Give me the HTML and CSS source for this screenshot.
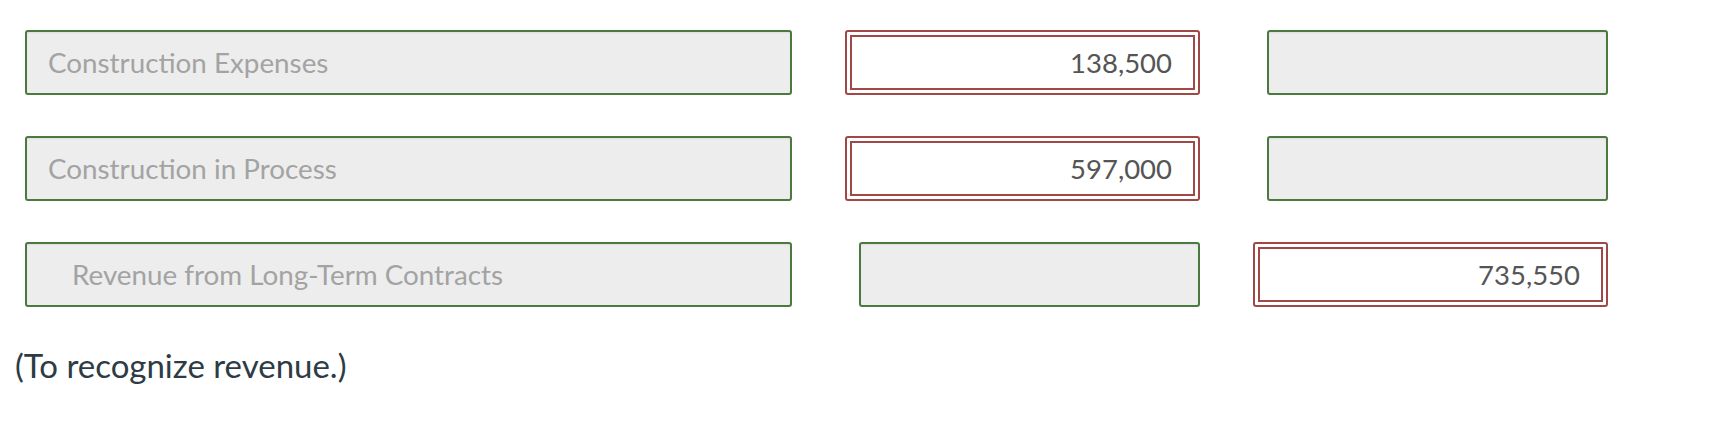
FILE: index.html
```html
<!DOCTYPE html>
<html>
<head>
<meta charset="utf-8">
<link rel="stylesheet" href="styles.css">
</head>
<body>
<div class="page">
  <div class="row">
    <div class="field label"><span>Construction Expenses</span></div>
    <div class="slot"><div class="answer"><div class="inner">138,500</div></div></div>
    <div class="slot"><div class="field amount"></div></div>
  </div>
  <div class="row">
    <div class="field label"><span>Construction in Process</span></div>
    <div class="slot"><div class="answer"><div class="inner">597,000</div></div></div>
    <div class="slot"><div class="field amount"></div></div>
  </div>
  <div class="row">
    <div class="field label indent"><span>Revenue from Long-Term Contracts</span></div>
    <div class="slot"><div class="field amount"></div></div>
    <div class="slot"><div class="answer"><div class="inner">735,550</div></div></div>
  </div>
  <p class="note">(To recognize revenue.)</p>
</div>
</body>
</html>
```

FILE: styles.css
```css
html, body {
  margin: 0;
  padding: 0;
  background: #ffffff;
}
.page {
  padding: 30px 0 0 25px;
  font-family: Lato, "Open Sans", sans-serif;
}
.row {
  display: flex;
  gap: 53px;
  height: 65px;
  margin-bottom: 41px;
}
.field {
  box-sizing: border-box;
  height: 65px;
  border: 2px solid #4b7a40;
  border-radius: 3px;
  background: #ededed;
  box-shadow: inset 0 1px 2px rgba(0, 0, 0, 0.06);
  display: flex;
  align-items: center;
}
.label {
  width: 767px;
  padding-left: 21px;
  font-size: 27.8px;
  color: #a3a3a3;
}
.label.indent {
  padding-left: 45px;
}
.slot {
  width: 355px;
  display: flex;
  justify-content: flex-end;
}
.amount {
  width: 341px;
}
.answer {
  box-sizing: border-box;
  width: 355px;
  height: 65px;
  border: 2px solid #a04845;
  border-radius: 3px;
  padding: 3px;
  background: #fff;
}
.inner {
  box-sizing: border-box;
  height: 100%;
  border: 2px solid #a04845;
  display: flex;
  align-items: center;
  justify-content: flex-end;
  padding-right: 21px;
  font-size: 27.5px;
  color: #555555;
}
.note {
  margin: -3px 0 0 -10px;
  font-size: 33px;
  color: #2d3b45;
}
```
